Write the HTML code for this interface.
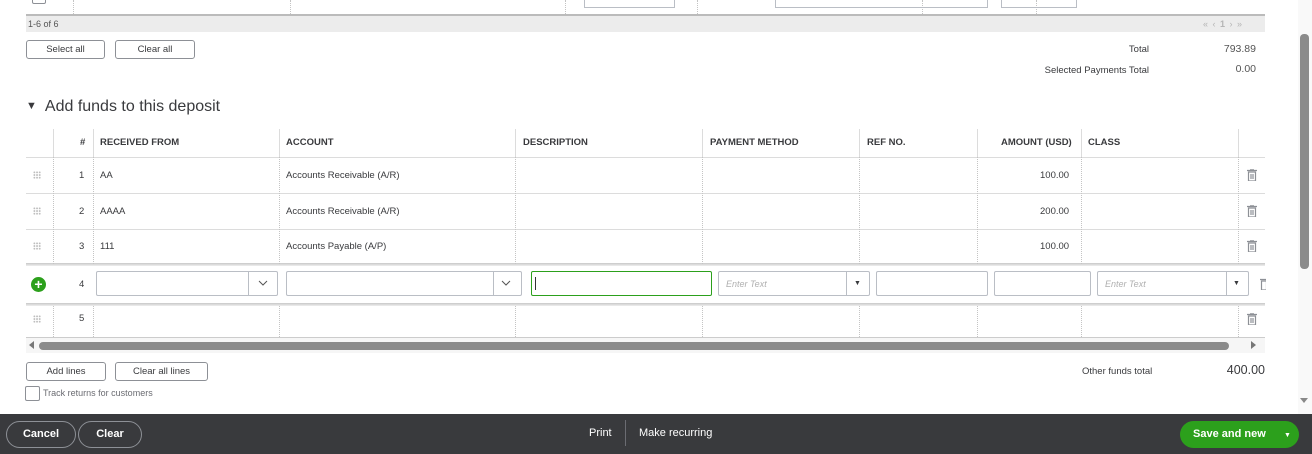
<!DOCTYPE html>
<html><head><style>
*{margin:0;padding:0;box-sizing:border-box}
body{width:1312px;height:454px;overflow:hidden;background:#fff;font-family:"Liberation Sans",sans-serif;color:#393a3d;position:relative;font-size:10px}
.a{position:absolute}
.btn{position:absolute;border:1px solid #8d9096;border-radius:3px;background:#fff;font-size:9.5px;text-align:center;color:#393a3d}
.vl{position:absolute;width:0;border-left:1px dotted #c4c4c4}
.hl{position:absolute;height:1px;background:#dcdcdc}
.th{position:absolute;top:137px;font-size:9.5px;font-weight:bold;color:#393a3d}
.td{position:absolute;font-size:9.5px;color:#393a3d}
.inp{position:absolute;border:1px solid #babec5;border-radius:2px;background:#fff;height:25px;top:271px}
.ph{font-style:italic;color:#b0b0b0;font-size:9px;position:absolute;left:7px;top:7px}
.dots{position:absolute;width:8px;height:8px;background-image:radial-gradient(circle,#bbb 0.8px,transparent 1px);background-size:2.7px 2.7px}
</style></head><body>
<div class="a" style="left:32px;top:-4px;width:14px;height:8px;border:1px solid #8d9096;border-radius:2px"></div>
<div class="vl" style="left:73px;top:0;height:14px"></div>
<div class="vl" style="left:290px;top:0;height:14px"></div>
<div class="vl" style="left:565px;top:0;height:14px"></div>
<div class="vl" style="left:697px;top:0;height:14px"></div>
<div class="vl" style="left:922px;top:0;height:14px"></div>
<div class="vl" style="left:1036px;top:0;height:14px"></div>
<div class="a" style="left:584px;top:-2px;width:91px;height:10px;border:1px solid #babec5"></div>
<div class="a" style="left:775px;top:-2px;width:213px;height:10px;border:1px solid #babec5"></div>
<div class="a" style="left:1001px;top:-2px;width:76px;height:10px;border:1px solid #babec5"></div>
<div class="a" style="left:26px;top:14px;width:1239px;height:2px;background:#bbb"></div>
<div class="a" style="left:26px;top:16px;width:1239px;height:16px;background:#ececec"></div>
<div class="a" style="left:28px;top:19px;font-size:9px;color:#555">1-6 of 6</div>
<div class="a" style="left:1203px;top:19px;font-size:9px;color:#b5b5b5;letter-spacing:1px">« ‹ <b>1</b> › »</div>
<div class="btn" style="left:26px;top:40px;width:79px;height:19px;line-height:17px">Select all</div>
<div class="btn" style="left:115px;top:40px;width:80px;height:19px;line-height:17px">Clear all</div>
<div class="a" style="left:1000px;width:149px;text-align:right;top:44px;font-size:9.5px">Total</div>
<div class="a" style="left:1160px;width:96px;text-align:right;top:43px;font-size:10.5px;color:#555">793.89</div>
<div class="a" style="left:1000px;width:149px;text-align:right;top:65px;font-size:9.5px">Selected Payments Total</div>
<div class="a" style="left:1160px;width:96px;text-align:right;top:63px;font-size:10.5px;color:#555">0.00</div>
<div class="a" style="left:26px;top:98px;font-size:16px;color:#393a3d"><span style="font-size:11px;position:relative;top:-2px">▼</span>&nbsp; Add funds to this deposit</div>

<div class="hl" style="left:26px;top:157px;width:1239px"></div>
<div class="hl" style="left:26px;top:193px;width:1239px"></div>
<div class="hl" style="left:26px;top:229px;width:1239px"></div>
<div class="a" style="left:26px;top:263px;width:1239px;height:3px;background:linear-gradient(#c8c8c8,#eee)"></div>
<div class="a" style="left:26px;top:303px;width:1239px;height:3px;background:linear-gradient(#c8c8c8,#eee)"></div>
<div class="hl" style="left:26px;top:337px;width:1239px;background:#ccc"></div>
<div class="a" style="left:53px;top:129px;width:1px;height:28px;background:#dcdcdc"></div>
<div class="a" style="left:93px;top:129px;width:1px;height:28px;background:#dcdcdc"></div>
<div class="a" style="left:279px;top:129px;width:1px;height:28px;background:#dcdcdc"></div>
<div class="a" style="left:515px;top:129px;width:1px;height:28px;background:#dcdcdc"></div>
<div class="a" style="left:702px;top:129px;width:1px;height:28px;background:#dcdcdc"></div>
<div class="a" style="left:859px;top:129px;width:1px;height:28px;background:#dcdcdc"></div>
<div class="a" style="left:977px;top:129px;width:1px;height:28px;background:#dcdcdc"></div>
<div class="a" style="left:1081px;top:129px;width:1px;height:28px;background:#dcdcdc"></div>
<div class="a" style="left:1238px;top:129px;width:1px;height:28px;background:#dcdcdc"></div>
<div class="vl" style="left:53px;top:157px;height:107px"></div><div class="vl" style="left:53px;top:306px;height:31px"></div>
<div class="vl" style="left:93px;top:157px;height:107px"></div><div class="vl" style="left:93px;top:306px;height:31px"></div>
<div class="vl" style="left:279px;top:157px;height:107px"></div><div class="vl" style="left:279px;top:306px;height:31px"></div>
<div class="vl" style="left:515px;top:157px;height:107px"></div><div class="vl" style="left:515px;top:306px;height:31px"></div>
<div class="vl" style="left:702px;top:157px;height:107px"></div><div class="vl" style="left:702px;top:306px;height:31px"></div>
<div class="vl" style="left:859px;top:157px;height:107px"></div><div class="vl" style="left:859px;top:306px;height:31px"></div>
<div class="vl" style="left:977px;top:157px;height:107px"></div><div class="vl" style="left:977px;top:306px;height:31px"></div>
<div class="vl" style="left:1081px;top:157px;height:107px"></div><div class="vl" style="left:1081px;top:306px;height:31px"></div>
<div class="vl" style="left:1238px;top:157px;height:107px"></div><div class="vl" style="left:1238px;top:306px;height:31px"></div>

<div class="th" style="left:80px">#</div>
<div class="th" style="left:100px">RECEIVED FROM</div>
<div class="th" style="left:286px">ACCOUNT</div>
<div class="th" style="left:523px">DESCRIPTION</div>
<div class="th" style="left:710px">PAYMENT METHOD</div>
<div class="th" style="left:867px">REF NO.</div>
<div class="th" style="left:1001px">AMOUNT (USD)</div>
<div class="th" style="left:1088px">CLASS</div>

<div class="dots" style="left:33px;top:171px"></div>
<div class="td" style="left:79px;top:170px">1</div><div class="td" style="left:100px;top:170px">AA</div><div class="td" style="left:286px;top:170px">Accounts Receivable (A/R)</div><div class="td" style="left:1040px;top:170px">100.00</div>
<div class="dots" style="left:33px;top:207px"></div>
<div class="td" style="left:79px;top:206px">2</div><div class="td" style="left:100px;top:206px">AAAA</div><div class="td" style="left:286px;top:206px">Accounts Receivable (A/R)</div><div class="td" style="left:1040px;top:206px">200.00</div>
<div class="dots" style="left:33px;top:242px"></div>
<div class="td" style="left:79px;top:241px">3</div><div class="td" style="left:100px;top:241px">111</div><div class="td" style="left:286px;top:241px">Accounts Payable (A/P)</div><div class="td" style="left:1040px;top:241px">100.00</div>
<div class="dots" style="left:33px;top:315px"></div>
<div class="td" style="left:79px;top:313px">5</div>

<div class="a" style="left:31px;top:277px;width:15px;height:15px;border-radius:50%;background:#2ca01c;color:#fff;font-weight:bold;font-size:14px;line-height:14px;text-align:center">+</div>
<div class="td" style="left:79px;top:279px">4</div>
<div class="inp" style="left:96px;width:182px"><div class="a" style="left:151px;top:0;height:23px;border-left:1px solid #babec5"></div><svg class="a" style="left:161px;top:8px" width="10" height="7"><path d="M1 1l4 4 4-4" stroke="#555" fill="none"/></svg></div>
<div class="inp" style="left:286px;width:236px"><div class="a" style="left:206px;top:0;height:23px;border-left:1px solid #babec5"></div><svg class="a" style="left:214px;top:8px" width="10" height="7"><path d="M1 1l4 4 4-4" stroke="#555" fill="none"/></svg></div>
<div class="inp" style="left:531px;width:181px;border-color:#2ca01c"><div class="a" style="left:3px;top:5px;width:1px;height:13px;background:#333"></div></div>
<div class="inp" style="left:718px;width:152px"><span class="ph">Enter Text</span><div class="a" style="left:127px;top:0;height:23px;border-left:1px solid #babec5"></div><div class="a" style="left:135px;top:8px;font-size:7px">▼</div></div>
<div class="inp" style="left:876px;width:112px"></div>
<div class="inp" style="left:994px;width:97px"></div>
<div class="inp" style="left:1097px;width:152px"><span class="ph">Enter Text</span><div class="a" style="left:128px;top:0;height:23px;border-left:1px solid #babec5"></div><div class="a" style="left:135px;top:8px;font-size:7px">▼</div></div>

<svg class="a" style="left:1247px;top:169px" width="10" height="12"><path d="M0 1.5h10M3 0h4M1.5 3h7v9h-7zM4 5v5M6 5v5" stroke="#8d9096" fill="none" stroke-width="1.2"/></svg>
<svg class="a" style="left:1247px;top:205px" width="10" height="12"><path d="M0 1.5h10M3 0h4M1.5 3h7v9h-7zM4 5v5M6 5v5" stroke="#8d9096" fill="none" stroke-width="1.2"/></svg>
<svg class="a" style="left:1247px;top:240px" width="10" height="12"><path d="M0 1.5h10M3 0h4M1.5 3h7v9h-7zM4 5v5M6 5v5" stroke="#8d9096" fill="none" stroke-width="1.2"/></svg>
<svg class="a" style="left:1260px;top:278px" width="6" height="12"><path d="M0 1.5h6M1.5 3h5v9h-5z" stroke="#8d9096" fill="none" stroke-width="1.2"/></svg>
<svg class="a" style="left:1247px;top:313px" width="10" height="12"><path d="M0 1.5h10M3 0h4M1.5 3h7v9h-7zM4 5v5M6 5v5" stroke="#8d9096" fill="none" stroke-width="1.2"/></svg>

<div class="a" style="left:26px;top:338px;width:1239px;height:15px;background:#f6f6f6"></div>
<div class="a" style="left:39px;top:342px;width:1190px;height:8px;border-radius:4px;background:#8b8b8b"></div>
<div class="a" style="left:29px;top:341px;width:0;height:0;border:4px solid transparent;border-right:5px solid #777;border-left:none"></div>
<div class="a" style="left:1251px;top:341px;width:0;height:0;border:4px solid transparent;border-left:5px solid #777;border-right:none"></div>

<div class="btn" style="left:26px;top:362px;width:80px;height:19px;line-height:17px">Add lines</div>
<div class="btn" style="left:115px;top:362px;width:93px;height:19px;line-height:17px">Clear all lines</div>
<div class="a" style="left:25px;top:386px;width:15px;height:15px;border:1px solid #8d9096;border-radius:2px"></div>
<div class="a" style="left:43px;top:388px;font-size:9px;color:#6b6c72">Track returns for customers</div>
<div class="a" style="left:1082px;top:366px;font-size:9.5px">Other funds total</div>
<div class="a" style="left:1160px;width:105px;text-align:right;top:363px;font-size:12.5px;color:#393a3d">400.00</div>

<div class="a" style="left:1298px;top:0;width:14px;height:414px;background:#f9f9f9"></div>
<div class="a" style="left:1300px;top:34px;width:9px;height:235px;border-radius:4px;background:#8b8b8b"></div>
<div class="a" style="left:1300px;top:398px;width:0;height:0;border:4px solid transparent;border-top:5px solid #888;border-bottom:none"></div>

<div class="a" style="left:0;top:414px;width:1312px;height:40px;background:#393a3d"></div>
<div class="a" style="left:6px;top:421px;width:70px;height:27px;border:1px solid #8d9096;border-radius:14px;color:#fff;font-weight:bold;font-size:11px;text-align:center;line-height:25px">Cancel</div>
<div class="a" style="left:78px;top:421px;width:64px;height:27px;border:1px solid #8d9096;border-radius:14px;color:#fff;font-weight:bold;font-size:11px;text-align:center;line-height:25px">Clear</div>
<div class="a" style="left:589px;top:427px;color:#fff;font-size:11px">Print</div>
<div class="a" style="left:625px;top:420px;width:1px;height:26px;background:#6b6c72"></div>
<div class="a" style="left:639px;top:427px;color:#fff;font-size:11px">Make recurring</div>
<div class="a" style="left:1180px;top:421px;width:119px;height:27px;border-radius:14px;background:#2ca01c;color:#fff;font-weight:bold;font-size:11px;line-height:27px;padding-left:13px">Save and new<span style="position:absolute;left:104px;top:1px;font-size:7px">▼</span></div>
</body></html>
